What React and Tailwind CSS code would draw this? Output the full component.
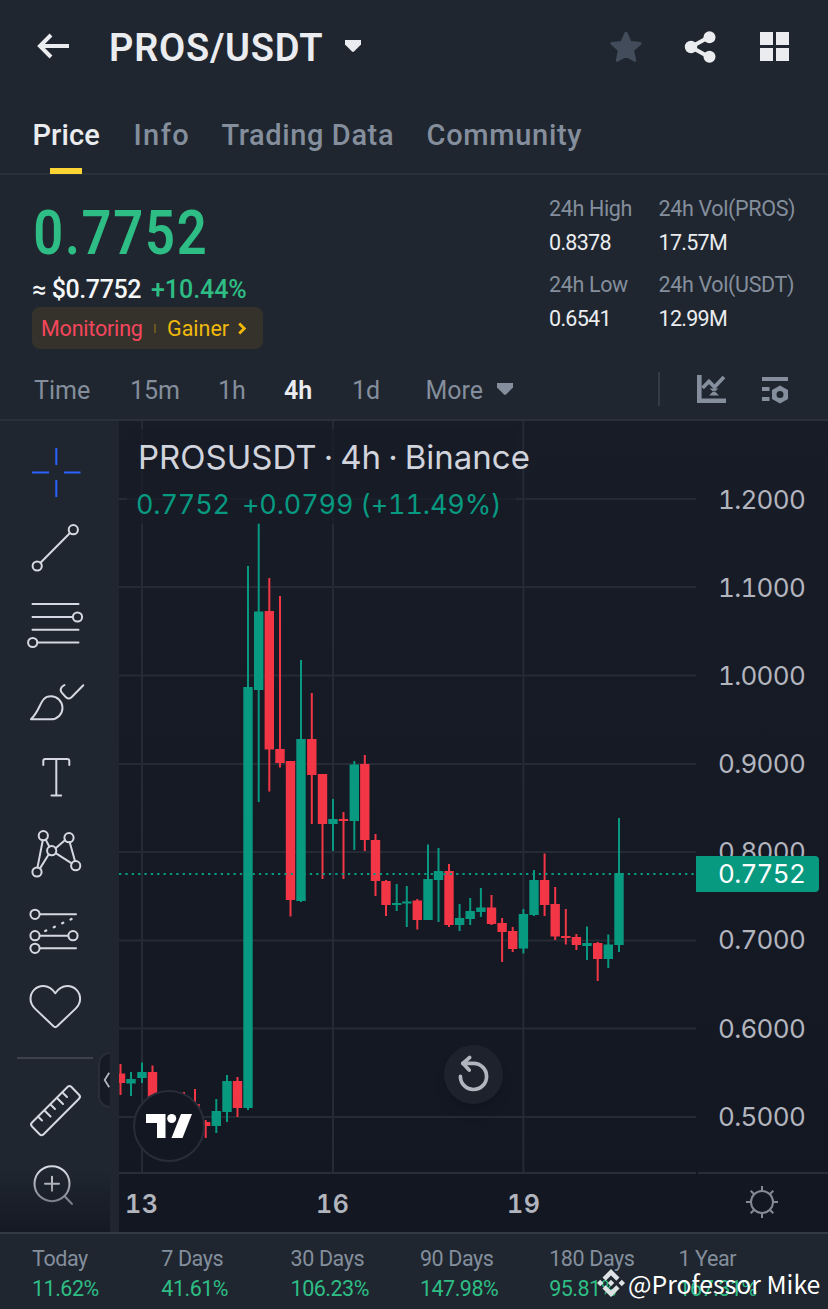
import React from "react";

const tabs = [
  { title: "Price", cls: "w-[101px] tracking-[0.1px]" },
  { title: "Info", cls: "w-[88px] tracking-[1.4px]" },
  { title: "Trading Data", cls: "w-[205px] tracking-[0.6px]" },
  { title: "Community", cls: "w-[160px] tracking-[0.7px]" },
];

const stats = [
  { label: "24h High", value: "0.8378" },
  { label: "24h Vol(PROS)", value: "17.57M" },
  { label: "24h Low", value: "0.6541" },
  { label: "24h Vol(USDT)", value: "12.99M" },
];

const intervals = [
  { title: "Time", cls: "w-[96px]" },
  { title: "15m", cls: "w-[88px]" },
  { title: "1h", cls: "w-[66px]" },
  { title: "4h", cls: "w-[68px]" },
  { title: "1d", cls: "w-[73.5px]" },
];

const periods = [
  { label: "Today", value: "11.62%" },
  { label: "7 Days", value: "41.61%" },
  { label: "30 Days", value: "106.23%" },
  { label: "90 Days", value: "147.98%" },
  { label: "180 Days", value: "95.81%" },
  { label: "1 Year", value: "167.31%" },
];

const priceTicks = ["1.2000", "1.1000", "1.0000", "0.9000", "0.8000", "0.7000", "0.6000", "0.5000"];

// [x, high, open/close top, open/close bottom, low, up]
const candles = [
  [120.5, 1064, 1073.5, 1083, 1095, 0],
  [131, 1072, 1079, 1083.5, 1096, 1],
  [142, 1062.5, 1072, 1078, 1083, 1],
  [152.5, 1065.5, 1072, 1104, 1108, 0],
  [184, 1092, 1100, 1110, 1114, 0],
  [195, 1089, 1104, 1112, 1116, 0],
  [205.7, 1120, 1122, 1126, 1138, 0],
  [216.3, 1099, 1111, 1126, 1133, 1],
  [227, 1075, 1081, 1112, 1122, 1],
  [237.5, 1077, 1081, 1108, 1117, 0],
  [248, 566, 687, 1108, 1110, 1],
  [258.7, 523, 611.5, 690, 802, 1],
  [269.3, 578, 611, 749.5, 791.5, 0],
  [280, 596, 749, 763, 767.5, 0],
  [290.5, 761, 761, 900, 916.5, 0],
  [301, 660, 739, 901, 902, 1],
  [311.8, 693, 739, 775, 824, 0],
  [322.5, 774, 774, 824, 879, 0],
  [333, 799, 819, 824, 851, 1],
  [343.5, 812, 819, 821, 879, 0],
  [354.3, 761, 764.5, 821, 850, 1],
  [364.8, 755, 764, 840, 851, 0],
  [375.5, 834, 840, 881, 896, 0],
  [386, 880, 881, 905, 916, 0],
  [396.7, 884, 903, 905, 911, 1],
  [406.8, 886, 901.5, 903.5, 927, 1],
  [417.3, 899, 900.5, 920, 929.5, 0],
  [428, 844.5, 879, 920, 920, 1],
  [438.5, 848, 871, 880, 922, 1],
  [449, 864, 871, 925, 927, 0],
  [459.6, 904, 918, 925, 931, 1],
  [470.2, 898, 911, 919, 925, 1],
  [480.9, 888, 907.5, 912, 917, 1],
  [491.5, 895, 907.5, 924, 925, 0],
  [502.1, 918, 923, 932, 962, 0],
  [512.7, 927, 931, 949, 952, 0],
  [523.4, 909, 914, 948.5, 953.5, 1],
  [534, 870, 880, 915, 916, 1],
  [544.6, 853.5, 880, 905, 916, 0],
  [555.2, 887, 904, 936.5, 940, 0],
  [565.8, 909, 936, 938, 944.5, 0],
  [576.4, 934, 937, 945, 950, 0],
  [587, 926.5, 943, 946, 960, 1],
  [597.7, 942, 943, 959, 981, 0],
  [608.3, 934.5, 944.5, 959, 968, 1],
  [619, 818, 873, 945, 952, 1],
];

const gridX = [142, 333, 523.4];
const gridY = [499, 587, 675.5, 764, 852, 940.5, 1028.5, 1117];

const Caret = ({ className }) => (
  <svg viewBox="0 0 18 14" className={className} fill="currentColor">
    <path d="M1 1h16v4.5L10 12.6q-1 .9-2 0L1 5.5z" />
  </svg>
);

function Header() {
  return (
    <header className="flex h-[95px] shrink-0 items-center pl-[36px] pr-[39px] pb-[2px] text-[#eaecef]">
      <svg viewBox="0 0 34 28" className="mb-px h-[28px] w-[34px]" fill="none" stroke="currentColor" strokeWidth="4">
        <path d="M33 14H4M15 3 4 14l11 11" />
      </svg>
      <h1 className="ml-[39px] w-[235px] whitespace-nowrap pt-[2px] text-[38px] font-semibold leading-none tracking-[0.75px]">
        PROS/USDT
      </h1>
      <Caret className="mb-px h-[14px] w-[18px]" />
      <div className="ml-auto flex items-center">
        <svg viewBox="0 0 32 32" className="h-8 w-8 text-[#434c5a]" fill="currentColor" stroke="currentColor" strokeWidth="3" strokeLinejoin="round">
          <path d="M16 2.2l4.1 9.2 10 1.1-7.5 6.7 2.1 10.1L16 24.4l-8.7 4.9 2.1-10.1-7.5-6.7 10-1.1z" />
        </svg>
        <svg viewBox="0 0 32 32" className="ml-[42px] h-8 w-8" fill="currentColor" stroke="currentColor">
          <path d="M25 6 7 16l18 10" fill="none" strokeWidth="4" />
          <circle cx="25.5" cy="6.3" r="6" stroke="none" />
          <circle cx="7" cy="16" r="6.2" stroke="none" />
          <circle cx="25.5" cy="25.7" r="6" stroke="none" />
        </svg>
        <div className="ml-[44px] grid grid-cols-2 gap-[3px]">
          <i className="h-[13px] w-[13px] bg-[#eaecef]" />
          <i className="h-[13px] w-[13px] bg-[#eaecef]" />
          <i className="h-[13px] w-[13px] bg-[#eaecef]" />
          <i className="h-[13px] w-[13px] bg-[#eaecef]" />
        </div>
      </div>
    </header>
  );
}

function Tabs() {
  return (
    <nav className="flex h-[80px] shrink-0 border-b-2 border-[#29303a] pl-[32.500px] text-[29px] font-medium">
      {tabs.map((tab, i) => (
        <div key={tab.title} className={`whitespace-nowrap leading-[80px] ${tab.cls} ${i === 0 ? "text-[#eaecef]" : "text-[#848e9c]"}`}>
          {tab.title}
          {i === 0 && <span className="-mt-[7px] ml-[17px] block h-[6px] w-[32px] bg-[#fcd535]" />}
        </div>
      ))}
    </nav>
  );
}

function Summary() {
  return (
    <section className="flex h-[182px] shrink-0 justify-between pl-8">
      <div>
        <div className="mt-[28px] h-[60px] w-[210px] origin-left scale-x-[0.86] pl-[1.500px] text-[61px] font-semibold leading-[60px] tracking-[2px] text-[#2ebd85]">
          0.7752
        </div>
        <div className="mt-[14px] flex h-[26px] items-center whitespace-nowrap text-[25px] font-medium leading-[26px]">
          <span className="w-[119px] tracking-[-0.4px] text-[#f5f6f7]">≈ $0.7752</span>
          <span className="tracking-[-0.05px] text-[#2ebd85]">+10.44%</span>
        </div>
        <div className="mt-[4px] flex h-[42px] w-[231px] items-center whitespace-nowrap rounded-lg bg-[#35322c] pl-[9px] text-[21.5px]">
          <span className="w-[113px] pt-[2px] tracking-[-0.2px] text-[#f6465d]">Monitoring</span>
          <i className="h-[9px] w-[2px] bg-[#6b5620]" />
          <span className="ml-[11px] w-[70px] pt-[2px] text-[#f0b90b]">Gainer</span>
          <svg viewBox="0 0 10 14" className="h-[13px] w-[10px]" fill="none" stroke="#f0b90b" strokeWidth="3">
            <path d="M2 1.5 7.5 7 2 12.5" />
          </svg>
        </div>
      </div>
      <div className="grid h-[153px] w-[279px] grid-cols-[109.5px_169.5px] grid-rows-[76.5px_76.5px] pt-[16.500px] text-[21.5px]">
        {stats.map((s) => (
          <div key={s.label} className="whitespace-nowrap leading-[34px]">
            <div className="tracking-[-0.35px] text-[#848e9c]">{s.label}</div>
            <div className="tracking-[-0.7px] text-[#eaecef]">{s.value}</div>
          </div>
        ))}
      </div>
    </section>
  );
}

function IntervalBar() {
  return (
    <section className="flex h-[64px] shrink-0 items-center border-b-2 border-[#29303a] pl-[34px] pt-[5px] text-[25px] text-[#848e9c]">
      {intervals.map((it) => (
        <div key={it.title} className={`whitespace-nowrap ${it.cls} ${it.title === "4h" ? "font-semibold text-[#eaecef]" : ""}`}>
          {it.title}
        </div>
      ))}
      <div className="w-[70.500px]">More</div>
      <Caret className="-mt-[4px] h-[14px] w-[18px]" />
      <i className="-mt-[4px] ml-[144px] h-[34px] w-[2px] bg-[#333b47]" />
      <svg viewBox="0 0 30 30" className="-mt-[4px] ml-[36px] h-[30px] w-[30px]" fill="none" stroke="currentColor" strokeWidth="4.6">
        <path d="M3.3 1v25.7H30" />
        <path d="M6.5 14 13 7.5l5.5 5.5L28 3" strokeWidth="3.8" />
        <path d="M13.5 14.5h9L18 18.2zM13 21.5h10L18 16.5z" fill="currentColor" stroke="none" />
      </svg>
      <svg viewBox="0 0 28 30" className="-mt-[4px] ml-[35px] h-[30px] w-[28px]" fill="currentColor">
        <path d="M1 3h26v4H1zM1 13h7.500v4H1zM1 23h7.500v4H1z" />
        <path fillRule="evenodd" d="M19 11.500l8 4.500v9l-8 4.500-8-4.500v-9zM19 17a3.500 3.500 0 1 0 0 7 3.500 3.500 0 1 0 0-7z" />
      </svg>
    </section>
  );
}

const ToolIcon = ({ children }) => (
  <svg viewBox="0 0 110 76" className="h-[76px] w-[110px] shrink-0" fill="none" stroke="#d5d8e0" strokeWidth="2" strokeLinecap="round" strokeLinejoin="round">
    {children}
  </svg>
);

function Toolbar() {
  return (
    <aside className="relative flex w-[119px] shrink-0 flex-col bg-[#1f262f] pt-[13px]">
      {/* crosshair */}
      <ToolIcon>
        <path d="M56.300 14v17M56.300 46v17M32 38.500h17M64 38.500h16.500" stroke="#2962ff" strokeLinecap="butt" />
      </ToolIcon>
      {/* trend line */}
      <ToolIcon>
        <path d="M40.500 52.700 70 23" />
        <circle cx="73.300" cy="19.700" r="4.600" />
        <circle cx="37.200" cy="56" r="4.600" />
      </ToolIcon>
      {/* fib retracement */}
      <ToolIcon>
        <path d="M32.500 18h46M32.500 31H72.500M32.500 43.700h46M37.500 56.500h41" />
        <circle cx="77.500" cy="31" r="4.600" />
        <circle cx="32.700" cy="56.500" r="4.600" />
      </ToolIcon>
      {/* brush */}
      <ToolIcon>
        <path d="M31 57.300C42 46.500 39.500 34.300 51 34.300a11.500 11.500 0 0 1 0 23z" />
        <path d="M64.500 23l-2.500 1.800q-2.700 3 0 6l4 4.500q2.700 2.500 5.500 0L83.300 23.300" />
      </ToolIcon>
      {/* text */}
      <ToolIcon>
        <path d="M43.300 27v-4q0-2 2-2h22q2 0 2 2v4M56.300 21v36.500M51.500 57.500h9.700" />
      </ToolIcon>
      {/* pattern */}
      <ToolIcon>
        <path d="M42.800 26.300 37.500 53.400M45.700 25.600l3.700 7.200M55.600 34.300l9.600-8.200M48.800 40.300 40 54.400M55.700 39.100l16 10.200M69.700 28.300l5.300 18.800" />
        <circle cx="43.300" cy="21.700" r="4.600" />
        <circle cx="69" cy="23.700" r="4.600" />
        <circle cx="51.700" cy="36.700" r="4.600" />
        <circle cx="37" cy="58" r="4.600" />
        <circle cx="75.700" cy="51.700" r="4.600" />
      </ToolIcon>
      {/* forecast */}
      <ToolIcon>
        <path d="M40 24.300h36M40 45.700h28M40 58.300h36" />
        <path d="M45.200 41l1-.5M53.800 37.200l1-.5M62.200 33.300l1-.5M70.500 29.500l1-.5" strokeWidth="2.400" />
        <circle cx="35" cy="24.300" r="4.600" />
        <circle cx="35" cy="45.700" r="4.600" />
        <circle cx="73" cy="45.700" r="4.600" />
        <circle cx="35" cy="58.300" r="4.600" />
      </ToolIcon>
      {/* favourites */}
      <ToolIcon>
        <path d="M55.300 27.300c-3-4.500-7-7.300-12-7.300-7.500 0-12.800 6-12.800 12.800 0 4 1.600 7 4.500 9.800l18.500 17.700q1.800 1.600 3.600 0L75.600 42.600c2.900-2.800 4.500-5.800 4.500-9.800C80.100 26 74.800 20 67.300 20c-5 0-9 2.800-12 7.300z" />
      </ToolIcon>
      <i className="ml-[17px] mt-[15px] h-[2px] w-[76px] shrink-0 bg-[#3c414c]" />
      <div className="mt-[14px]">
        {/* measure */}
        <ToolIcon>
          <path d="M67.500 14 32 49.500q-2 2 0 4l7.600 7.700q2 2 4 0L79 25.700q2-2 0-4L71.500 14q-2-2-4 0z" />
          <path d="M62.500 19.500l4.500 4.500M57 25l6 6M50.500 31.500l4.500 4.500M44.500 37.500l6 6M38 43.500l4 4" />
        </ToolIcon>
      </div>
      {/* zoom in */}
      <ToolIcon>
        <circle cx="52" cy="34.700" r="17.500" />
        <path d="M45 34.700h14M52 27.700v14M64.700 47.300l7.300 7.700" />
      </ToolIcon>
      <div className="absolute bottom-0 left-0 h-[62px] w-[110px] bg-gradient-to-b from-[#131722]/0 to-[#131722]/90" />
      <div className="absolute left-[98px] top-[631px] flex h-[56px] w-[12px] items-center rounded-l-xl border-2 border-r-0 border-[#292d38] bg-[#161a25]">
        <svg viewBox="0 0 10 20" className="ml-[2px] h-[18px] w-[9px] shrink-0" fill="none" stroke="#aeb6c0" strokeWidth="2">
          <path d="M8 2 3 10l5 8" />
        </svg>
      </div>
    </aside>
  );
}

function CandleChart() {
  return (
    <svg viewBox="119 421 577 751" className="block h-[751px] w-[577px]">
      {gridX.map((x) => (
        <rect key={x} x={x - 1} y="421" width="2" height="751" fill="#262a35" />
      ))}
      {gridY.map((y) => (
        <rect key={y} x="119" y={y - 1} width="577" height="2" fill="#262a35" />
      ))}
      {candles.map(([x, high, top, bottom, low, up]) => (
        <g key={x} fill={up ? "#089981" : "#f23645"}>
          <rect x={x - 1} y={high} width="2" height={low - high} />
          <rect x={x - 4.7} y={top} width="9.400" height={bottom - top} />
        </g>
      ))}
      <path d="M119 874h577" stroke="#089981" strokeWidth="2.200" strokeDasharray="2.300 4.060" />
    </svg>
  );
}

function Chart() {
  return (
    <div className="relative flex min-w-0 flex-1 flex-col bg-gradient-to-b from-[#181c27] to-[#131722] font-[Inter,sans-serif] tabular-nums">
      <div className="flex h-[753px] shrink-0">
        <div className="w-[577px] border-b-2 border-[#292d38]">
          <CandleChart />
        </div>
        <div className="relative ml-[2px] flex-1 border-b-2 border-[#292d38] pt-[34.500px] text-[26px] tracking-[-0.7px] text-[#b2b5be]">
          {priceTicks.map((p) => (
            <div key={p} className="h-[88.200px] pl-[20px] leading-[88.200px]">
              {p}
            </div>
          ))}
          <div className="absolute -left-[2px] top-[435px] h-[36px] w-[123px] rounded-r-[4px] bg-[#089981] pl-[22px] leading-[36px] text-white">
            0.7752
          </div>
        </div>
      </div>
      <div className="flex h-[58px] items-center text-[25px] font-semibold tracking-[0.5px] text-[#b2b5be]">
        <span className="w-[191px] pl-[6px] pt-[3px]">13</span>
        <span className="w-[191px] pl-[6px] pt-[3px]">16</span>
        <span className="w-[244px] pl-[6px] pt-[3px]">19</span>
        <svg viewBox="0 0 34 34" className="-mt-[2px] h-[34px] w-[34px]" fill="none" stroke="#868993" strokeWidth="2">
          <circle cx="17" cy="17" r="11" />
          <path d="M17 6V1M17 33v-5M6 17H1M33 17h-5M9.200 9.200 5.700 5.700M28.300 28.300l-3.500-3.500M9.200 24.800l-3.500 3.500M28.300 5.700l-3.500 3.500" />
        </svg>
      </div>

      {/* legend */}
      <div className="absolute left-[8px] top-[8px] w-[389px] whitespace-nowrap bg-[#171b26]/70 pl-[11px]">
        <div className="h-[56px] text-[33px] leading-[56px] text-[#d1d4dc] [word-spacing:-1.8px]">PROSUSDT · 4h · Binance</div>
        <div className="flex h-[39px] text-[27px] leading-[39px] tracking-[-0.15px] text-[#089981]">
          <span className="-ml-[2px] w-[106px]">0.7752</span>
          <span>+0.0799 (+11.49%)</span>
        </div>
      </div>

      {/* TradingView badge */}
      <div className="absolute left-[14px] top-[669px] flex h-[72px] w-[72px] items-center justify-center rounded-full border-2 border-[#292d38] bg-[#131722]">
        <svg viewBox="0 0 46 24" className="h-[24px] w-[46px]" fill="#fff">
          <path d="M0 0h19.500v24H11V9H0z" />
          <circle cx="25.700" cy="4.500" r="4.500" />
          <path d="M35 0h11L36.500 24h-11z" />
        </svg>
      </div>

      {/* reset view */}
      <div className="absolute left-[325px] top-[624px] flex h-[59px] w-[59px] items-center justify-center rounded-full bg-[#1e222d] shadow-lg">
        <svg viewBox="0 0 32 38" className="mb-[2px] h-[37px] w-[31px]" fill="none" stroke="#b2b5be" strokeWidth="3.800" strokeLinecap="round" strokeLinejoin="round">
          <path d="M2.500 22A13.500 13.500 0 1 0 16 8.500H5" />
          <path d="M12 2.500 5 8.500l6.500 7" />
        </svg>
      </div>
    </div>
  );
}

function Footer() {
  return (
    <footer className="relative flex h-[77px] shrink-0 border-t-2 border-[#333a45] pl-8 pt-[10px] text-[21.5px]">
      {periods.map((p) => (
        <div key={p.label} className="w-[129.300px] shrink-0 whitespace-nowrap leading-[30px]">
          <div className="tracking-[-0.4px] text-[#848e9c]">{p.label}</div>
          <div className="tracking-[-0.5px] text-[#2ebd85]">{p.value}</div>
        </div>
      ))}
      <div className="absolute left-[597px] top-[32px] flex items-center whitespace-nowrap font-['Noto_Sans_CJK_SC',sans-serif] text-[24.800px] leading-[34px] text-white">
        <svg viewBox="0 0 28 28" className="mr-[3px] h-[28px] w-[28px]" fill="#dfe2e4">
          <path d="M14 0l8.500 8.500-3.200 3.200L14 6.400l-5.300 5.300-3.200-3.200zM14 28l-8.500-8.500 3.200-3.200 5.300 5.300 5.300-5.300 3.200 3.200zM14 10.800l3.200 3.200-3.200 3.200-3.200-3.200zM3.200 10.800 6.400 14l-3.200 3.200L0 14zM24.800 10.800 28 14l-3.200 3.200-3.200-3.200z" />
        </svg>
        @Professor Mike
      </div>
    </footer>
  );
}

export default function App() {
  return (
    <div className="flex h-[1309px] w-[828px] flex-col overflow-hidden bg-[#1f262f] font-[Roboto,sans-serif]">
      <Header />
      <Tabs />
      <Summary />
      <IntervalBar />
      <main className="flex h-[811px] shrink-0">
        <Toolbar />
        <Chart />
      </main>
      <Footer />
    </div>
  );
}
